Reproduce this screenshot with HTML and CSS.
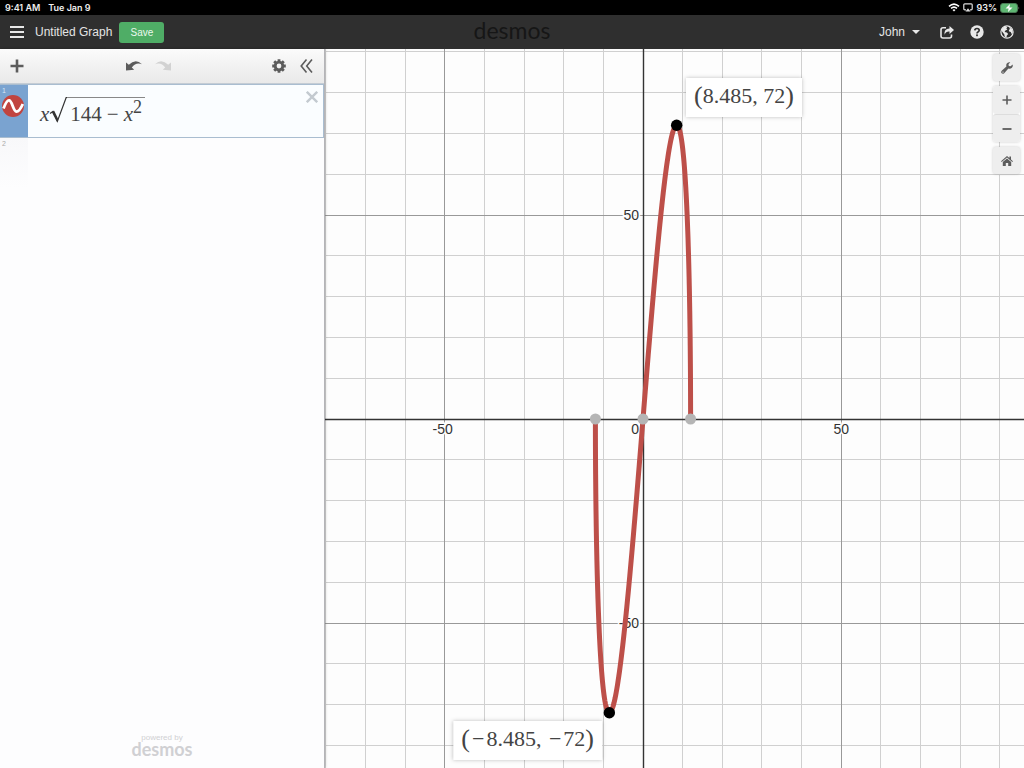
FILE: index.html
```
<!DOCTYPE html>
<html lang="en">
<head>
    <meta charset="UTF-8">
    <meta name="viewport" content="width=device-width, initial-scale=1.0">
    <title>Untitled Graph</title>
    <link rel="stylesheet" href="styles.css">
</head>
<body>

    <div class="status-bar">
        <span>9:41 AM</span>
        <span>Tue Jan 9</span>
        <div class="status-right">
            <svg width="12" height="9" viewBox="0 0 12 9" fill="none" stroke="#fff" stroke-width="1.5">
                <path d="M1 3.4Q6-1.2 11 3.4M3 5.4Q6 2.8 9 5.4"/>
                <path d="M4.5 6.9Q6 5.7 7.5 6.9L6 8.6z" fill="#fff" stroke="none"/>
            </svg>
            <svg width="10" height="9" viewBox="0 0 10 9" fill="none" stroke="#ddd" stroke-width="1.2">
                <path d="M3 6.8H1.8Q.8 6.8.8 5.8V1.8Q.8.8 1.8.8H8.2Q9.2.8 9.2 1.8V5.8Q9.2 6.8 8.2 6.8H7"/>
                <path d="M5 5.3L7.5 8.6H2.5z" fill="#ddd" stroke="none"/>
            </svg>
            <span>93%</span>
            <svg width="20" height="10" viewBox="0 0 20 10">
                <rect x=".5" y=".5" width="17" height="9" rx="2.5" fill="#5fb773" stroke="#4a7a55"/>
                <path d="M18.5 3.5Q20 5 18.5 6.5z" fill="#8a8a8a"/>
                <path d="M10 1L5.5 5.5H8.6L8 9L12.5 4.5H9.4z" fill="#fff"/>
            </svg>
        </div>
    </div>

    <header class="header">
        <div class="header-side">
            <button class="icon-btn" aria-label="Menu">
                <svg width="14" height="12" viewBox="0 0 14 12" fill="#e8e8e8">
                    <path d="M0 0h14v2H0zM0 5h14v2H0zM0 10h14v2H0z"/>
                </svg>
            </button>
            <span class="graph-title">Untitled Graph</span>
            <button class="save-btn">Save</button>
        </div>
        <div class="logo">desmos</div>
        <div class="header-side header-right">
            <button class="user-btn">John
                <svg width="8" height="4" viewBox="0 0 8 4"><path d="M0 0h8L4 4z" fill="#e8e8e8"/></svg>
            </button>
            <button class="icon-btn" aria-label="Share">
                <svg width="14" height="13" viewBox="0 0 14 13">
                    <path d="M6 1.8H3Q1 1.8 1 3.8V10Q1 12 3 12H9.5Q11.5 12 11.5 10V8.5" fill="none" stroke="#e8e8e8" stroke-width="1.6"/>
                    <path d="M9.5 0L14 4L9.5 8V5.6Q6 5.2 4.6 8.8Q3.6 2.8 9.5 2.5z" fill="#e8e8e8"/>
                </svg>
            </button>
            <button class="icon-btn" aria-label="Help">
                <svg width="14" height="14" viewBox="0 0 14 14">
                    <circle cx="7" cy="7" r="6.7" fill="#e8e8e8"/>
                    <path d="M4.8 5.4Q4.9 3.5 7 3.5Q9.2 3.5 9.2 5.3Q9.2 6.3 8 6.9Q7 7.4 7 8.4" fill="none" stroke="#2f2f2f" stroke-width="1.7"/>
                    <rect x="6.1" y="9.4" width="1.8" height="1.8" fill="#2f2f2f"/>
                </svg>
            </button>
            <button class="icon-btn" aria-label="Language">
                <svg width="14" height="14" viewBox="0 0 14 14">
                    <circle cx="7" cy="7" r="6.1" fill="none" stroke="#e8e8e8" stroke-width="1.2"/>
                    <path d="M2 3.5L5 1.2L7.2 2L6.4 3.6L7.4 4.6L5.4 5.6L4.6 7L6.8 7.6L8.2 9L6.8 10.6L6.4 12.8L4.6 11.6L4.4 9.4L2.8 7.4L1.4 5.6zM8.6 1.6L12 4.2L12.8 7.6L11.6 9L10.8 7L9.2 6.6L8.8 5L10 4z" fill="#e8e8e8"/>
                </svg>
            </button>
        </div>
    </header>

    <main class="main">
        <section class="sidebar">
            <div class="toolbar">
                <button class="icon-btn" aria-label="Add item">
                    <svg width="14" height="14" viewBox="0 0 14 14"><path d="M7 .5v13M.5 7h13" stroke="#5c5c5c" stroke-width="2.6"/></svg>
                </button>
                <div class="history">
                    <button class="icon-btn" aria-label="Undo">
                        <svg width="16" height="10" viewBox="0 0 16 10"><path d="M0 1.5L2.8 3.8Q9.5-3 16 3.2Q10 .8 5.8 6.4L8.2 8.8L0 9.5z" fill="#5c5c5c"/></svg>
                    </button>
                    <button class="icon-btn" aria-label="Redo" disabled>
                        <svg width="16" height="10" viewBox="0 0 16 10"><path d="M16 1.5L13.2 3.8Q6.5-3 0 3.2Q6 .8 10.2 6.4L7.8 8.8L16 9.5z" fill="#d2d2d2"/></svg>
                    </button>
                </div>
                <div class="tools-right">
                    <button class="icon-btn" aria-label="Edit list">
                        <svg width="14" height="14" viewBox="-7 -7 14 14">
                            <circle r="3.8" fill="none" stroke="#5c5c5c" stroke-width="2.8"/>
                            <path d="M0-6.8V-4M0 6.8V4M-6.8 0H-4M6.8 0H4M-4.8-4.8L-3-3M4.8 4.8L3 3M-4.8 4.8L-3 3M4.8-4.8L3-3" stroke="#5c5c5c" stroke-width="2.8"/>
                        </svg>
                    </button>
                    <button class="icon-btn" aria-label="Hide list">
                        <svg width="13" height="14" viewBox="0 0 13 14"><path d="M6.5 .5L1.2 7L6.5 13.5M12 .5L6.7 7L12 13.5" fill="none" stroke="#5c5c5c" stroke-width="1.6"/></svg>
                    </button>
                </div>
            </div>

            <div class="expression selected">
                <div class="tab">
                    <span class="index">1</span>
                    <button class="icon-btn" aria-label="Hide expression 1">
                        <svg width="22" height="22" viewBox="0 0 22 22">
                            <circle cx="11" cy="11" r="11" fill="#c1443f"/>
                            <path d="M1.5 13.5C4 7 5.5 5 7.2 5.4C10.5 6.2 11 16.2 14.5 16.6Q17.5 16.6 20.8 9" fill="none" stroke="#fff" stroke-width="2.8"/>
                        </svg>
                    </button>
                </div>
                <div class="math">
                    <i>x</i>
                    <svg width="18" height="27" viewBox="0 0 18 27">
                        <path d="M1 16.5L4 14.5L8.5 24L17.2 .5H18" fill="none" stroke="#333" stroke-width="1.2"/>
                        <path d="M2.8 15L5.2 13.8L9.2 22L8.3 25.8z" fill="#333"/>
                    </svg>
                    <span class="radicand">144<span class="minus">−</span><i>x</i><sup>2</sup></span>
                </div>
                <button class="icon-btn delete" aria-label="Delete expression 1">
                    <svg width="12" height="12" viewBox="0 0 12 12"><path d="M.8 .8L11.2 11.2M11.2 .8L.8 11.2" stroke="#c3cad0" stroke-width="2.4"/></svg>
                </button>
            </div>

            <div class="expression">
                <div class="tab"><span class="index">2</span></div>
            </div>

            <div class="powered">
                <span class="powered-by">powered by</span>
                <span class="powered-logo">desmos</span>
            </div>
        </section>

        <section class="graph" id="graph">
            <svg class="plot" id="plot"></svg>
            <div class="point-label above" id="label-max"><span class="paren">(</span>8.485, 72<span class="paren">)</span></div>
            <div class="point-label below" id="label-min"><span class="paren">(</span><span class="sign">−</span>8.485, <span class="sign">−</span>72<span class="paren">)</span></div>

            <div class="graph-tools">
                <button class="tool" aria-label="Graph settings">
                    <svg width="12" height="12" viewBox="0 0 12 12">
                        <path d="M11.6 2.6L9.6 4.3L7.8 3.9L7.5 2.2L9.3 .3Q6.8-.3 5.6 1.7Q5 2.9 5.4 4.4L.7 8.8Q-.4 10.2.7 11.3Q1.9 12.3 3.2 11.2L7.4 6.6Q9.4 7.2 10.9 5.8Q12.2 4.4 11.6 2.6z" fill="#5c5c5c"/>
                        <circle cx="2" cy="10.1" r=".7" fill="#eee"/>
                    </svg>
                </button>
                <div class="zoom">
                    <button class="tool" aria-label="Zoom in">
                        <svg width="10" height="10" viewBox="0 0 10 10"><path d="M5 .5v9M.5 5h9" stroke="#5c5c5c" stroke-width="1.6"/></svg>
                    </button>
                    <button class="tool" aria-label="Zoom out">
                        <svg width="10" height="10" viewBox="0 0 10 10"><path d="M.5 5h9" stroke="#5c5c5c" stroke-width="1.8"/></svg>
                    </button>
                </div>
                <button class="tool" aria-label="Default zoom">
                    <svg width="12" height="10" viewBox="0 0 12 10">
                        <path d="M6 0L8.4 2.1V.6H10V3.5L12 5.2L11.3 6L6 1.5L.7 6L0 5.2z" fill="#5c5c5c"/>
                        <path d="M6 2.5L10.2 6V10H7.2V7H4.8V10H1.8V6z" fill="#5c5c5c"/>
                    </svg>
                </button>
            </div>
        </section>
    </main>

    <script src="graph.js"></script>
</body>
</html>
```

FILE: styles.css
```
* {
    box-sizing: border-box;
}

body {
    font-family: "Liberation Sans", Arial, sans-serif;
    margin: 0;
    height: 100vh;
    display: flex;
    flex-direction: column;
    background-color: #fdfdfe;
    overflow: hidden;
}

button {
    font-family: inherit;
    border: none;
    background: none;
    padding: 0;
    cursor: pointer;
}

svg {
    display: block;
}

.status-bar {
    background-color: #000;
    color: #eee;
    font-family: Inter, sans-serif;
    font-size: 9px;
    font-weight: 600;
    line-height: 15px;
    padding: 0 4px 0 5px;
    display: flex;
    gap: 8px;
}

.status-right {
    margin-left: auto;
    display: flex;
    align-items: center;
    gap: 3px;
}

.status-right span {
    font-size: 9px;
}

.header {
    background-color: #2f2f2f;
    color: #e4e4e4;
    height: 34px;
    flex: none;
    display: flex;
    align-items: center;
    padding: 0 10px;
}

.header-side {
    flex: 1;
    display: flex;
    align-items: center;
}

.header-right {
    justify-content: flex-end;
    gap: 16px;
}

.graph-title {
    font-size: 12px;
    margin: 0 7px 0 11px;
}

.save-btn {
    background-color: #4fad66;
    color: #eaf7ed;
    width: 45px;
    height: 21px;
    border-radius: 3px;
    font-size: 10px;
}

.logo {
    font-family: Lato, sans-serif;
    font-size: 23px;
    line-height: 28px;
    padding-bottom: 4px;
    color: #161616;
}

.user-btn {
    color: #e4e4e4;
    font-size: 12px;
    display: flex;
    align-items: center;
    gap: 7px;
    margin-right: 4px;
}

.main {
    flex: 1;
    display: flex;
    min-height: 0;
}

.sidebar {
    width: 325px;
    flex: none;
    display: flex;
    flex-direction: column;
    background-color: #fdfdfe;
    border-right: 1px solid #b4b4b8;
    box-shadow: 0 0 3px rgba(0, 0, 0, 0.25);
    z-index: 1;
}

.toolbar {
    height: 35px;
    display: flex;
    align-items: center;
    justify-content: space-between;
    padding: 0 11px 0 10px;
    background: linear-gradient(#fbfbfb, #e9e9e9);
    border-bottom: 1px solid #c4ccd4;
}

.history {
    display: flex;
    gap: 13px;
}

.tools-right {
    display: flex;
    gap: 14px;
}

.expression {
    display: flex;
    min-height: 50px;
    position: relative;
}

.expression.selected {
    background-color: #fafdff;
    border: 1px solid #a9bdd0;
    border-left: none;
    min-height: 54px;
}

.tab {
    width: 28px;
    padding: 2px;
    background: linear-gradient(#f8f8fa, #fdfdfe);
}

.selected .tab {
    background: #7aa3d0;
}

.index {
    display: block;
    font-size: 7px;
    line-height: 8px;
    color: #aaa;
}

.selected .index {
    color: #d7e6f5;
}

.math {
    font-family: "Liberation Serif", serif;
    font-size: 21px;
    line-height: 24px;
    color: #444;
    display: flex;
    align-items: flex-start;
    padding: 12px 0 0 12px;
}

.math > i {
    padding-top: 5px;
}

.radicand {
    border-top: 1px solid #888;
    padding: 4px 3px 0 3px;
}

.minus {
    padding: 0 5px;
}

.radicand sup {
    font-size: 18px;
    line-height: 0;
    vertical-align: 8px;
}

.delete {
    position: absolute;
    top: 6px;
    right: 5px;
}

.powered {
    margin-top: auto;
    padding-bottom: 10px;
    display: flex;
    flex-direction: column;
    align-items: center;
    color: #d0d0d3;
}

.powered-by {
    font-size: 8px;
    line-height: 8px;
}

.powered-logo {
    font-family: Lato, sans-serif;
    font-size: 18px;
    line-height: 18px;
    font-weight: bold;
    margin-top: -2px;
}

.graph {
    flex: 1;
    position: relative;
    background-color: #fdfdfd;
    overflow: hidden;
}

.plot {
    width: 100%;
    height: 100%;
}

.grid-minor {
    stroke: #d0d0d0;
}

.grid-major {
    stroke: #999;
}

.axis {
    stroke: #333;
    stroke-width: 1.4;
}

.axis-number {
    font-size: 14px;
    fill: #333;
    stroke: #fdfdfd;
    stroke-width: 3;
    paint-order: stroke;
}

.curve {
    fill: none;
    stroke: #bd4f49;
    stroke-width: 5;
}

.point {
    fill: #b5b5b5;
}

.point-open {
    fill: #000;
}

.point-label {
    position: absolute;
    font-family: "Liberation Serif", serif;
    font-size: 22px;
    line-height: 36px;
    color: #444;
    background-color: #fff;
    padding: 0 8px 3px;
    box-shadow: 0 0 4px rgba(0, 0, 0, 0.25);
    display: flex;
    white-space: pre;
}

.point-label.above {
    transform: translate(9px, -47px);
}

.point-label.below {
    transform: translate(-100%, 8px);
    margin-left: -7px;
}

.paren {
    font-size: 26px;
}

.sign {
    padding: 0 2px;
}

.graph-tools {
    position: absolute;
    top: 5px;
    right: 4px;
    display: flex;
    flex-direction: column;
    gap: 5px;
}

.tool {
    width: 27px;
    height: 27px;
    display: flex;
    align-items: center;
    justify-content: center;
    background-color: #eee;
    border-radius: 3px;
    box-shadow: 0 0 3px rgba(0, 0, 0, 0.2);
}

.zoom {
    border-radius: 3px;
    box-shadow: 0 0 3px rgba(0, 0, 0, 0.2);
}

.zoom .tool {
    height: 28px;
    box-shadow: none;
}

.zoom .tool + .tool {
    border-top: 1px solid #ddd;
}
```

FILE: graph.js
```
const SVG_NS = 'http://www.w3.org/2000/svg';
const plot = document.getElementById('plot');

// pixels per unit
const scaleX = 3.966;
const scaleY = 4.08;
// where the origin sits in the view
const originX = 0.455;
const originY = 0.514;

function add(name, attrs, text) {
    const el = document.createElementNS(SVG_NS, name);
    for (const key in attrs) {
        el.setAttribute(key, attrs[key]);
    }
    if (text !== undefined) {
        el.textContent = text;
    }
    plot.appendChild(el);
}

function draw() {
    const w = plot.clientWidth;
    const h = plot.clientHeight;
    const ox = Math.round(w * originX);
    const oy = Math.round(h * originY);
    const px = x => ox + x * scaleX;
    const py = y => oy - y * scaleY;
    const snap = v => Math.round(v) + 0.5;

    plot.innerHTML = '';

    const xMin = Math.ceil(-ox / scaleX / 10) * 10;
    const xMax = (w - ox) / scaleX;
    const yMin = Math.ceil((oy - h) / scaleY / 10) * 10;
    const yMax = oy / scaleY;

    // minor lines first so the major ones cross on top
    for (const major of [false, true]) {
        const cls = major ? 'grid-major' : 'grid-minor';
        for (let x = xMin; x <= xMax; x += 10) {
            if ((x % 50 === 0) === major) {
                add('line', { x1: snap(px(x) - 0.5), x2: snap(px(x) - 0.5), y1: 0, y2: h, class: cls });
            }
        }
        for (let y = yMin; y <= yMax; y += 10) {
            if ((y % 50 === 0) === major) {
                add('line', { x1: 0, x2: w, y1: snap(py(y) - 0.5), y2: snap(py(y) - 0.5), class: cls });
            }
        }
    }

    add('line', { x1: snap(ox), x2: snap(ox), y1: 0, y2: h, class: 'axis' });
    add('line', { x1: 0, x2: w, y1: snap(oy - 0.5), y2: snap(oy - 0.5), class: 'axis' });

    for (let x = Math.ceil(xMin / 50) * 50; x <= xMax; x += 50) {
        if (x !== 0) {
            add('text', { x: px(x) - (x < 0 ? 2 : 0), y: oy + 15, 'text-anchor': 'middle', class: 'axis-number' }, x);
        }
    }
    for (let y = Math.ceil(yMin / 50) * 50; y <= yMax; y += 50) {
        if (y !== 0) {
            add('text', { x: ox - 4, y: py(y) + 5, 'text-anchor': 'end', class: 'axis-number' }, y);
        }
    }
    add('text', { x: ox - 4, y: oy + 15, 'text-anchor': 'end', class: 'axis-number' }, 0);

    // y = x * sqrt(144 - x^2) with x = 12 sin t
    let d = '';
    for (let i = 0; i <= 200; i++) {
        const t = -Math.PI / 2 + Math.PI * i / 200;
        const x = 12 * Math.sin(t);
        const y = x * 12 * Math.cos(t);
        d += (i ? 'L' : 'M') + px(x).toFixed(2) + ' ' + py(y).toFixed(2);
    }
    add('path', { d: d, class: 'curve' });

    for (const x of [-12, 0, 12]) {
        add('circle', { cx: px(x), cy: oy, r: 5.5, class: 'point' });
    }
    for (const s of [-1, 1]) {
        add('circle', { cx: px(8.485 * s), cy: py(72 * s), r: 5.7, class: 'point-open' });
    }

    place('label-max', px(8.485), py(72));
    place('label-min', px(-8.485), py(-72));
}

function place(id, x, y) {
    const label = document.getElementById(id);
    label.style.left = Math.round(x) + 'px';
    label.style.top = Math.round(y) + 'px';
}

window.addEventListener('resize', draw);
draw();
```
